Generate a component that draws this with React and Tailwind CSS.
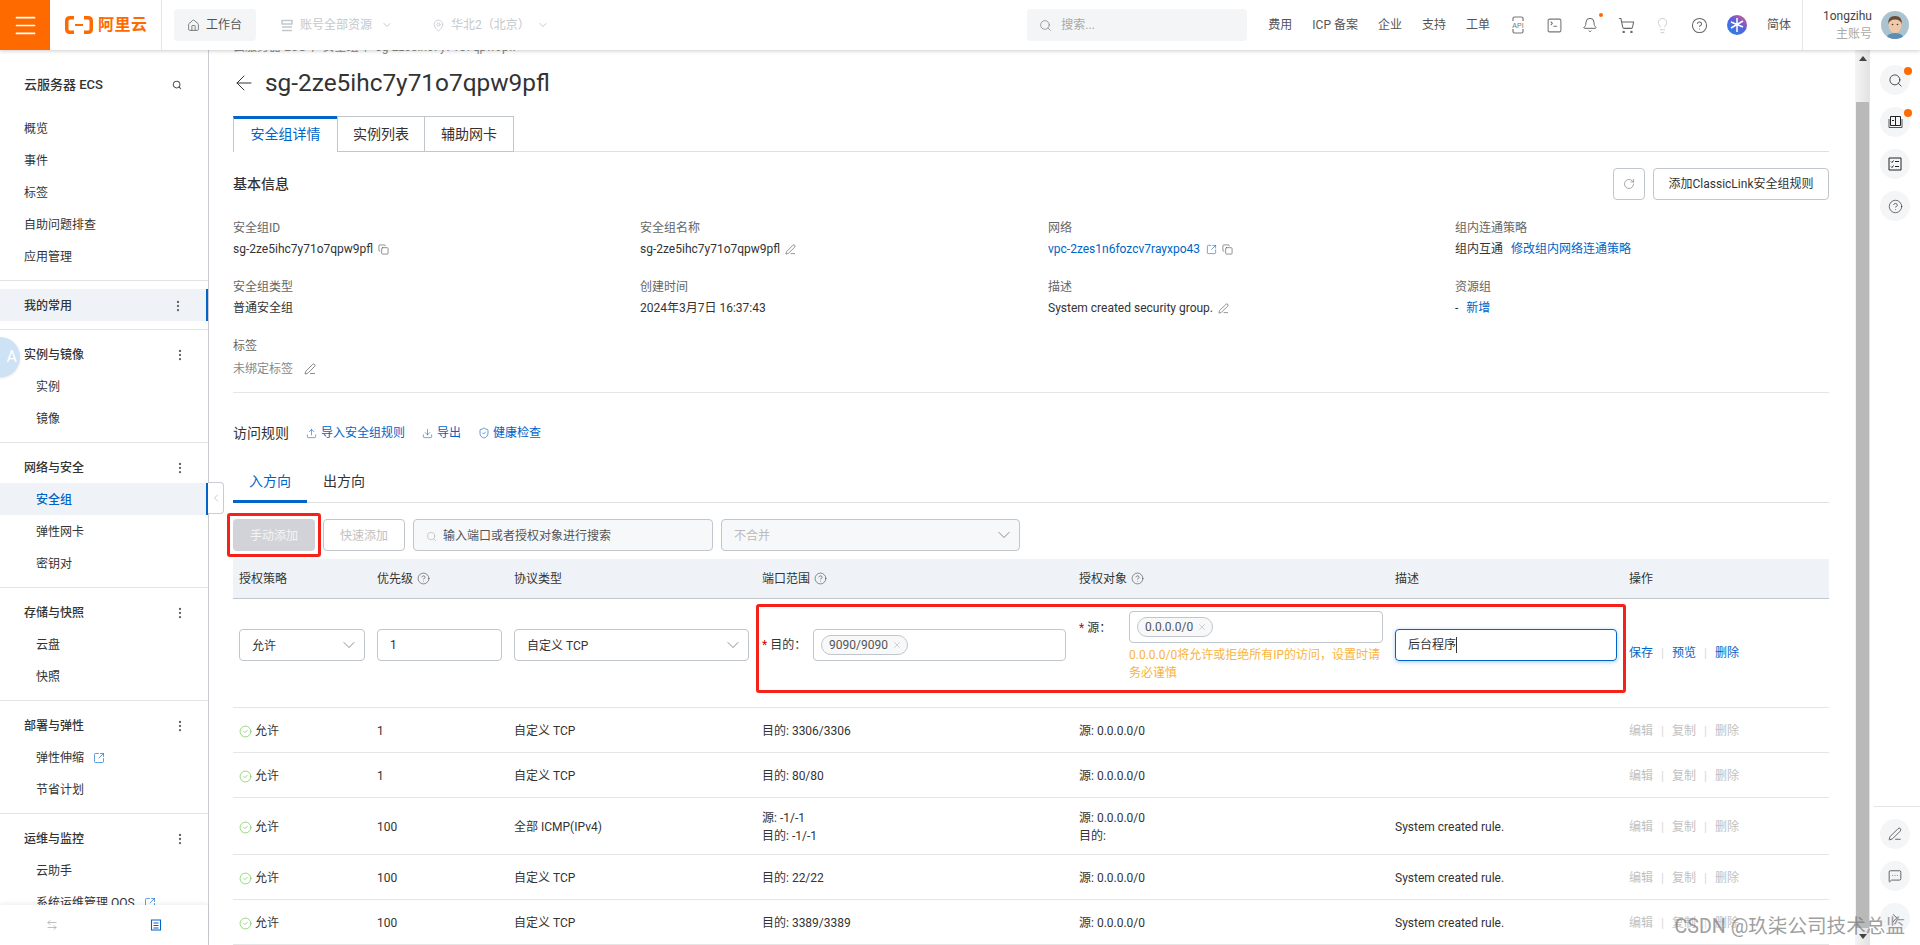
import React from "react";
import {
  House, ChevronDown, ChevronLeft, Search, Bell, ShoppingCart, Lightbulb, CircleHelp,
  EllipsisVertical, SquareArrowOutUpRight, Copy, PenLine, RotateCw, Upload, Download, ShieldCheck, CircleCheck,
  X, ArrowLeft, ArrowLeftRight, SquareTerminal, MessageSquareMore, MapPin, Menu,
} from "lucide-react";

const font = "font-['Roboto','Noto_Sans_CJK_SC',sans-serif]";
const row = "grid grid-cols-[138px_137px_248px_317px_316px_234px_206px]";

const groups = [
  { title: "我的常用", items: [], active: true },
  { title: "实例与镜像", items: ["实例", "镜像"] },
  { title: "网络与安全", items: ["安全组", "弹性网卡", "密钥对"] },
  { title: "存储与快照", items: ["云盘", "快照"] },
  { title: "部署与弹性", items: ["弹性伸缩", "节省计划"] },
  { title: "运维与监控", items: ["云助手", "系统运维管理 OOS"] },
];

const rules = [
  { pri: "1", proto: "自定义 TCP", port: ["目的: 3306/3306"], src: ["源: 0.0.0.0/0"], desc: "", h: "h-[45px]" },
  { pri: "1", proto: "自定义 TCP", port: ["目的: 80/80"], src: ["源: 0.0.0.0/0"], desc: "", h: "h-[45px]" },
  { pri: "100", proto: "全部 ICMP(IPv4)", port: ["源: -1/-1", "目的: -1/-1"], src: ["源: 0.0.0.0/0", "目的:"], desc: "System created rule.", h: "h-[57px]" },
  { pri: "100", proto: "自定义 TCP", port: ["目的: 22/22"], src: ["源: 0.0.0.0/0"], desc: "System created rule.", h: "h-[45px]" },
  { pri: "100", proto: "自定义 TCP", port: ["目的: 3389/3389"], src: ["源: 0.0.0.0/0"], desc: "System created rule.", h: "h-[45px]" },
];

function Logo() {
  return (
    <div className="flex items-center gap-[5px] text-[#ff6a00]">
      <svg width="28" height="18" viewBox="0 0 28 18" fill="none" stroke="#ff6a00" strokeWidth="3.5">
        <path d="M9 1.750H5Q1.750 1.750 1.750 5V13Q1.750 16.250 5 16.250H9" />
        <path d="M19 1.750H23Q26.250 1.750 26.250 5V13Q26.250 16.250 23 16.250H19" />
        <path d="M10 9H18" strokeWidth="2" />
      </svg>
      <span className="text-[16px] leading-[18px] font-bold tracking-[0.5px]">阿里云</span>
    </div>
  );
}

function ApiIcon() {
  return (
    <svg width="16" height="18" viewBox="0 0 16 18" fill="none" stroke="#777" strokeWidth="1.2">
      <path d="M3 5V2.500Q3 1 4.500 1H11.500Q13 1 13 2.500V5M3 13V15.500Q3 17 4.500 17H11.500Q13 17 13 15.500V13" />
      <text x="8" y="11.500" textAnchor="middle" fontSize="7" fill="#777" stroke="none" fontFamily="Liberation Sans">API</text>
    </svg>
  );
}

function Star() {
  return (
    <svg width="20" height="20" viewBox="0 0 20 20">
      <defs>
        <linearGradient id="starg" x1="0.2" y1="0.9" x2="0.8" y2="0.1">
          <stop offset="0" stopColor="#2f7de8" />
          <stop offset="0.6" stopColor="#5d5fd8" />
          <stop offset="1" stopColor="#c05a9c" />
        </linearGradient>
      </defs>
      <circle cx="10" cy="10" r="10" fill="url(#starg)" />
      <path d="M10 3V17M4 7L16 12M4 13L16 6" stroke="#fff" strokeWidth="1.500" />
    </svg>
  );
}

function Avatar() {
  return (
    <svg width="28" height="28" viewBox="0 0 28 28">
      <clipPath id="avc"><circle cx="14" cy="14" r="14" /></clipPath>
      <g clipPath="url(#avc)">
        <rect width="28" height="28" fill="#aac3cf" />
        <path d="M5 28Q6 22 14 22Q22 22 23 28Z" fill="#5f8db0" />
        <ellipse cx="14" cy="14" rx="6.500" ry="8" fill="#f0c9a8" />
        <path d="M7.500 13Q6.500 5 14 5Q21.500 5 20.500 13Q19.500 8.500 14 8.500Q8.500 8.500 7.500 13Z" fill="#6b4a35" />
        <circle cx="11.500" cy="13.500" r="0.800" fill="#333" />
        <circle cx="16.500" cy="13.500" r="0.800" fill="#333" />
      </g>
    </svg>
  );
}

function Header() {
  return (
    <header className="relative z-20 flex h-[50px] shrink-0 items-center bg-white shadow-[0_1px_4px_rgba(0,0,0,0.2)]">
      <div className="flex h-[50px] w-[50px] items-center justify-center bg-[#ff6a00]">
        <Menu size={27} color="#fff" strokeWidth={1.5} />
      </div>
      <div className="flex h-full w-[112px] items-center border-r border-[#e5e5e5] pl-[15px]">
        <Logo />
      </div>
      <div className="ml-3 flex h-8 w-[82px] items-center gap-[6px] rounded-sm bg-[#f4f5f7] pl-[13px] text-[12px] text-[#555]">
        <House size={13} strokeWidth={1.5} color="#666" />
        工作台
      </div>
      <div className="ml-[25px] flex items-center text-[12px] text-[#c4c8cc]">
        <svg width="12" height="13" viewBox="0 0 12 13" fill="none" stroke="#c4c8cc" strokeWidth="1.500">
          <path d="M1 1.500H11V5H1ZM1 8H11M1 11.500H11" />
        </svg>
        <span className="ml-[7px]">账号全部资源</span>
        <ChevronDown size={12} className="ml-[9px]" strokeWidth={2} />
      </div>
      <div className="ml-[39px] flex items-center text-[12px] text-[#c4c8cc]">
        <MapPin size={13} strokeWidth={1.500} />
        <span className="ml-[6px] w-[78px]">华北2（北京）</span>
        <ChevronDown size={12} className="ml-2" strokeWidth={2} />
      </div>
      <div className="flex-1" />
      <div className="flex h-8 w-[220px] items-center rounded-sm bg-[#f4f5f7] pl-3 text-[12px] text-[#a8a8a8]">
        <Search size={13} strokeWidth={1.25} color="#777" />
        <span className="ml-[9px]">搜索...</span>
      </div>
      <div className="ml-[21px] flex items-center text-[12px] text-[#555]">
        <span>费用</span>
        <span className="ml-5">ICP 备案</span>
        <span className="ml-5">企业</span>
        <span className="ml-5">支持</span>
        <span className="ml-5">工单</span>
        <span className="ml-5"><ApiIcon /></span>
        <SquareTerminal size={17} className="ml-5" strokeWidth={1.5} color="#777" />
        <span className="relative ml-[19px]">
          <Bell size={16} strokeWidth={1.500} color="#666" className="block" />
          <span className="absolute -right-[5px] -top-[4px] h-1 w-1 rounded-full bg-[#ff6a00]" />
        </span>
        <ShoppingCart size={17} className="ml-5" strokeWidth={1.500} color="#666" />
        <Lightbulb size={17} className="ml-[19px]" strokeWidth={1.25} color="#c4c8cc" />
        <CircleHelp size={17} className="ml-5" strokeWidth={1.500} color="#666" />
        <span className="ml-[19px]"><Star /></span>
        <span className="ml-5">简体</span>
      </div>
      <div className="ml-[11px] flex h-full w-[118px] items-center border-l border-[#e5e5e5] pl-[10px]">
        <div className="w-[59px] text-right text-[12px] leading-[18px]">
          <div className="text-[#444]">1ongzihu</div>
          <div className="text-[#aaa]">主账号</div>
        </div>
        <span className="ml-[9px]"><Avatar /></span>
      </div>
    </header>
  );
}

function Sidebar() {
  return (
    <aside className="relative flex w-[209px] shrink-0 flex-col border-r border-[#c9ccd0] bg-white text-[12px] text-[#333]">
      <div className="min-h-0 flex-1 overflow-hidden">
        <div className="mt-[19px] mb-[11px] flex h-8 items-center justify-between pl-6 pr-[26px]">
          <span className="text-[13px] font-medium">云服务器 ECS</span>
          <Search size={10} strokeWidth={2.5} color="#555" />
        </div>
        {["概览", "事件", "标签", "自助问题排查", "应用管理"].map((t) => (
          <div key={t} className="flex h-8 items-center pl-6 pt-[2px]">{t}</div>
        ))}
        <div className="h-2" />
        {groups.map((g) => (
          <div key={g.title} className="border-t border-[#e3e3e3] py-2">
            <div className={`flex h-8 items-center justify-between pl-6 pr-[21px] pt-[2px] font-medium ${g.active ? "border-r-2 border-[#0064c8] bg-[#eff3f8] pr-[19px]" : ""}`}>
              {g.title}
              <EllipsisVertical size={14} color="#666" />
            </div>
            {g.items.map((t) => (
              <div key={t} className={`flex h-8 items-center pl-9 pt-[2px] ${t === "安全组" ? "border-r-2 border-[#0064c8] bg-[#eff3f8] font-medium text-[#0064c8]" : ""}`}>
                {t}
                {(t === "弹性伸缩" || t === "系统运维管理 OOS") && (
                  <SquareArrowOutUpRight size={12} strokeWidth={1.25} color="#0064c8" className="ml-[9px]" />
                )}
              </div>
            ))}
          </div>
        ))}
      </div>
      <div className="z-10 flex h-10 shrink-0 items-center bg-white shadow-[0_-2px_4px_rgba(0,0,0,0.06)]">
        <div className="flex w-[104px] justify-center"><ArrowLeftRight size={12} color="#999" strokeWidth={1.25} /></div>
        <div className="flex w-[104px] justify-center">
          <svg width="12" height="12" viewBox="0 0 12 12" fill="none" stroke="#0064c8" strokeWidth="1.100">
            <path d="M1.500 1H10.500V11H1.500ZM3.500 4H8.500M3.500 6.500H8.500M3.500 9H8.500" />
          </svg>
        </div>
      </div>
      <div className="absolute -left-5 top-[287px] flex h-10 w-10 items-center justify-end rounded-full bg-[#cde2f5] pr-[3px] text-[16px] text-white shadow-sm">
        A
      </div>
      <div className="absolute -right-4 top-[432px] flex h-8 w-4 items-center justify-center rounded-r-sm border border-l-0 border-[#c9ccd0] bg-white">
        <ChevronLeft size={12} color="#aab" strokeWidth={1.25} />
      </div>
    </aside>
  );
}

function Info({ label, children, wide }) {
  return (
    <div className="w-[407px]">
      <div className="h-[18px] leading-[18px] text-[#666]">{label}</div>
      <div className={`mt-[3px] flex h-[18px] items-center leading-[18px] text-[#333] ${wide ? "mt-[5px]" : ""}`}>{children}</div>
    </div>
  );
}

function TagInput({ text, w }) {
  return (
    <div className={`flex h-8 items-center rounded-sm border border-[#c0c6cc] px-[7px] ${w}`}>
      <span className="flex h-5 items-center gap-1 rounded-full border border-[#c0c6cc] bg-[#f7f8fa] pl-[7px] pr-[5px] text-[#555]">
        {text}
        <X size={10} strokeWidth={1} color="#999" />
      </span>
    </div>
  );
}

function SelectBox({ label, w, muted }) {
  return (
    <div className={`flex h-8 items-center justify-between rounded-sm border border-[#c0c6cc] pl-3 pr-[5px] ${w} ${muted ? "bg-[#f7f8fa] text-[#bbb]" : "text-[#333]"}`}>
      <span className="pt-[2px]">{label}</span>
      <ChevronDown size={20} strokeWidth={0.8} color="#555" />
    </div>
  );
}

function Sep() {
  return <span className="mx-2 text-[#d8d8d8]">|</span>;
}

function Content() {
  return (
    <main className="min-w-0 flex-1 overflow-hidden bg-white pl-6 pr-[26px] text-[12px] text-[#333]">
      <div className="-mt-3 h-[18px] leading-[18px] text-[#888]">云服务器 ECS &nbsp;/&nbsp; 安全组 &nbsp;/&nbsp; sg-2ze5ihc7y71o7qpw9pfl</div>
      <div className="mb-[17px] mt-[11px] flex h-8 items-center">
        <ArrowLeft size={24} strokeWidth={1} color="#333" className="-ml-[1px]" />
        <h1 className="ml-[9px] text-[24.4px] leading-8 text-[#333]">sg-2ze5ihc7y71o7qpw9pfl</h1>
      </div>
      <div className="flex h-9 border-b border-[#e0e0e0] text-[14px]">
        <div className="flex h-9 w-[104px] items-center justify-center border-l border-t-[3px] border-[#0064c8] border-l-[#c0c6cc] bg-white pb-[3px] text-[#0064c8]">安全组详情</div>
        <div className="flex h-9 w-[88px] items-center justify-center border-x border-y border-[#c0c6cc]">实例列表</div>
        <div className="flex h-9 w-[89px] items-center justify-center border-y border-r border-[#c0c6cc]">辅助网卡</div>
      </div>
      <div className="mt-4 flex h-8 items-center">
        <span className="text-[14px] font-medium">基本信息</span>
        <div className="flex-1" />
        <div className="flex h-8 w-8 items-center justify-center rounded-sm border border-[#c0c6cc]"><RotateCw size={12} strokeWidth={1.25} color="#777" /></div>
        <div className="ml-2 flex h-8 w-[176px] items-center justify-center rounded-sm border border-[#c0c6cc]">添加ClassicLink安全组规则</div>
      </div>
      <div className="mt-[19px] grid grid-cols-[407px_408px_407px_374px] gap-y-5 border-b border-[#e5e5e5] pb-[14px]">
        <Info label="安全组ID">sg-2ze5ihc7y71o7qpw9pfl<Copy size={11} strokeWidth={1.25} className="ml-[5px]" color="#444" /></Info>
        <Info label="安全组名称">sg-2ze5ihc7y71o7qpw9pfl<PenLine size={11} strokeWidth={1.25} className="ml-[5px]" color="#444" /></Info>
        <Info label="网络">
          <span className="text-[#0064c8]">vpc-2zes1n6fozcv7rayxpo43</span>
          <SquareArrowOutUpRight size={11} strokeWidth={1.25} className="ml-[6px]" color="#0064c8" />
          <Copy size={11} strokeWidth={1.25} className="ml-[5px]" color="#444" />
        </Info>
        <Info label="组内连通策略">组内互通<span className="ml-2 text-[#0064c8]">修改组内网络连通策略</span></Info>
        <Info label="安全组类型">普通安全组</Info>
        <Info label="创建时间">2024年3月7日 16:37:43</Info>
        <Info label="描述">System created security group.<PenLine size={11} strokeWidth={1.25} className="ml-[5px]" color="#444" /></Info>
        <Info label="资源组">-<span className="ml-2 text-[#0064c8]">新增</span></Info>
        <Info label="标签" wide><span className="text-[#888]">未绑定标签</span><PenLine size={12} strokeWidth={1.25} className="ml-[11px]" color="#444" /></Info>
      </div>
      <div className="mt-[30px] flex h-5 items-center text-[#0064c8]">
        <span className="w-[73px] text-[14px] text-[#333]">访问规则</span>
        <Upload size={11} strokeWidth={1.25} />
        <span className="ml-1">导入安全组规则</span>
        <Download size={11} strokeWidth={1.25} className="ml-[17px]" />
        <span className="ml-1">导出</span>
        <ShieldCheck size={12} strokeWidth={1.25} className="ml-[17px]" />
        <span className="ml-[3px]">健康检查</span>
      </div>
      <div className="mt-5 flex h-10 border-b border-[#e0e0e0] text-[14px]">
        <div className="flex h-10 w-[74px] items-center justify-center border-b-[3px] border-[#0064c8] text-[#0064c8]">入方向</div>
        <div className="ml-[16px] flex h-10 items-center pb-[3px]">出方向</div>
      </div>
      <div className="mt-4 flex h-8 items-center gap-2">
        <div className="relative flex h-8 w-[82px] items-center justify-center rounded-sm bg-[#d1d3d8] pt-[2px] text-[#f4f4f4]">
          手动添加
          <span className="absolute -inset-[6px] rounded-[3px] border-[3px] border-[#f5221b]" />
        </div>
        <div className="flex h-8 w-[82px] items-center justify-center rounded-sm border border-[#c0c6cc] pt-[2px] text-[#c1c1c1]">快速添加</div>
        <div className="flex h-8 w-[300px] items-center rounded-sm border border-[#c0c6cc] bg-[#f7f8fa] pl-3 pt-[2px] text-[#555]">
          <Search size={11} strokeWidth={1} color="#999" />
          <span className="ml-[6px]">输入端口或者授权对象进行搜索</span>
        </div>
        <SelectBox label="不合并" w="w-[299px]" muted />
      </div>

      <div className={`${row} mt-2 h-10 items-center border-b border-[#c0c6cc] bg-[#eff3f8]`}>
        <div className="pl-[6px]">授权策略</div>
        <div className="flex items-center gap-1 pl-[6px]">优先级<CircleHelp size={13} strokeWidth={1} /></div>
        <div className="pl-[6px]">协议类型</div>
        <div className="flex items-center gap-1 pl-[6px]">端口范围<CircleHelp size={13} strokeWidth={1} /></div>
        <div className="flex items-center gap-1 pl-[6px]">授权对象<CircleHelp size={13} strokeWidth={1} /></div>
        <div className="pl-[6px]">描述</div>
        <div className="pl-[6px]">操作</div>
      </div>

      <div className={`${row} relative h-[109px] items-start border-b border-[#e5e5e5] pt-3`}>
        <div className="mt-[18px] pl-[6px]"><SelectBox label="允许" w="w-[126px]" /></div>
        <div className="mt-[18px] pl-[6px]">
          <div className="flex h-8 w-[125px] items-center rounded-sm border border-[#c0c6cc] pl-3">1</div>
        </div>
        <div className="mt-[18px] pl-[6px]"><SelectBox label="自定义 TCP" w="w-[235px]" /></div>
        <div className="mt-[18px] flex items-center pl-[6px]">
          <span className="w-[51px]"><span className="text-[#c00]">*</span> 目的：</span>
          <TagInput text="9090/9090" w="w-[253px]" />
        </div>
        <div className="flex pl-[6px]">
          <span className="mt-2 w-[50px]"><span className="text-[#c00]">*</span> 源：</span>
          <div className="w-[254px]">
            <TagInput text="0.0.0.0/0" w="w-[254px]" />
            <p className="mt-[3px] leading-[18px] text-[#f9b43c]">0.0.0.0/0将允许或拒绝所有IP的访问，设置时请务必谨慎</p>
          </div>
        </div>
        <div className="mt-[18px] pl-[6px]">
          <div className="flex h-8 w-[222px] items-center rounded-sm border border-[#0064c8] pl-3 shadow-[0_1px_4px_rgba(0,100,200,0.35)]">
            后台程序<span className="h-4 w-px bg-[#333]" />
          </div>
        </div>
        <div className="mt-[33px] pl-[6px] text-[#0064c8]">保存<Sep />预览<Sep />删除</div>
        <span className="absolute left-[523px] top-[5px] h-[89px] w-[870px] rounded-[3px] border-[3px] border-[#f5221b]" />
      </div>

      {rules.map((r, i) => (
        <div key={i} className={`${row} ${r.h} items-center border-b border-[#e5e5e5] pt-[2px]`}>
          <div className="flex items-center gap-[3px] pl-[6px]"><CircleCheck size={13} strokeWidth={1.25} color="#6cc04a" />允许</div>
          <div className="pl-[6px]">{r.pri}</div>
          <div className="pl-[6px]">{r.proto}</div>
          <div className="pl-[6px] leading-[18px]">{r.port.map((p) => <div key={p}>{p}</div>)}</div>
          <div className="pl-[6px] leading-[18px]">{r.src.map((p) => <div key={p}>{p}</div>)}</div>
          <div className="pl-[6px]">{r.desc}</div>
          <div className="pl-[6px] text-[#c1c1c1]">编辑<Sep />复制<Sep />删除</div>
        </div>
      ))}
    </main>
  );
}

function Scrollbar() {
  return (
    <div className="flex w-[15px] shrink-0 flex-col items-center bg-gradient-to-r from-[#f4f4f4] to-[#e2e2e2]">
      <div className="mt-[6px] h-0 w-0 border-x-[4px] border-b-[5px] border-x-transparent border-b-[#444]" />
      <div className="mt-[41px] w-[13px] flex-1 bg-[#b9b9b9]" />
      <div className="my-[6px] h-0 w-0 border-x-[4px] border-t-[5px] border-x-transparent border-t-[#444]" />
    </div>
  );
}

function RailButton({ children, dot }) {
  return (
    <div className="relative flex h-[30px] w-[30px] items-center justify-center rounded-full bg-[#f4f5f7]">
      {children}
      {dot && <span className="absolute -right-[2px] top-[2px] h-2 w-2 rounded-full bg-[#ff6a00]" />}
    </div>
  );
}

function Rail() {
  return (
    <div className="flex w-[50px] shrink-0 flex-col items-center bg-white">
      <div className="mt-[15px] flex flex-col gap-3">
        <RailButton dot><Search size={15} strokeWidth={1.25} color="#222" /></RailButton>
        <RailButton dot>
          <svg width="15" height="14" viewBox="0 0 15 14" fill="none" stroke="#222" strokeWidth="1">
            <path d="M2.500 1.500H12.500V10.500H2.500ZM7.500 1.500V10.500M4 5.500H6" />
            <path d="M1 4V12.500H14V4" stroke="#555" />
          </svg>
        </RailButton>
        <RailButton>
          <svg width="14" height="14" viewBox="0 0 14 14" fill="none" stroke="#222" strokeWidth="1">
            <path d="M1 1H13V13H1ZM7 4.500H11M7 9.500H11M3 4.500L4 5.500L5.500 3.500M3 9.500L4 10.500L5.500 8.500" />
          </svg>
        </RailButton>
        <RailButton><CircleHelp size={15} strokeWidth={1} color="#222" /></RailButton>
      </div>
      <div className="flex-1" />
      <div className="w-[46px] self-end border-t border-[#e5e5e5]" />
      <div className="mb-3 mt-3 flex flex-col gap-3">
        <RailButton><PenLine size={14} strokeWidth={1.25} color="#333" /></RailButton>
        <RailButton><MessageSquareMore size={14} strokeWidth={1.25} color="#333" /></RailButton>
        <RailButton><ChevronLeft size={14} strokeWidth={1.25} color="#333" className="rotate-180" /></RailButton>
      </div>
    </div>
  );
}

export default function App() {
  return (
    <div className={`${font} relative flex h-screen flex-col overflow-hidden bg-white`}>
      <Header />
      <div className="flex min-h-0 flex-1">
        <Sidebar />
        <Content />
        <Scrollbar />
        <Rail />
      </div>
      <div className="pointer-events-none absolute bottom-[5px] right-[15px] z-30 text-[19.6px] leading-[26px] text-[#777] opacity-70">
        CSDN @玖柒公司技术总监
      </div>
    </div>
  );
}
